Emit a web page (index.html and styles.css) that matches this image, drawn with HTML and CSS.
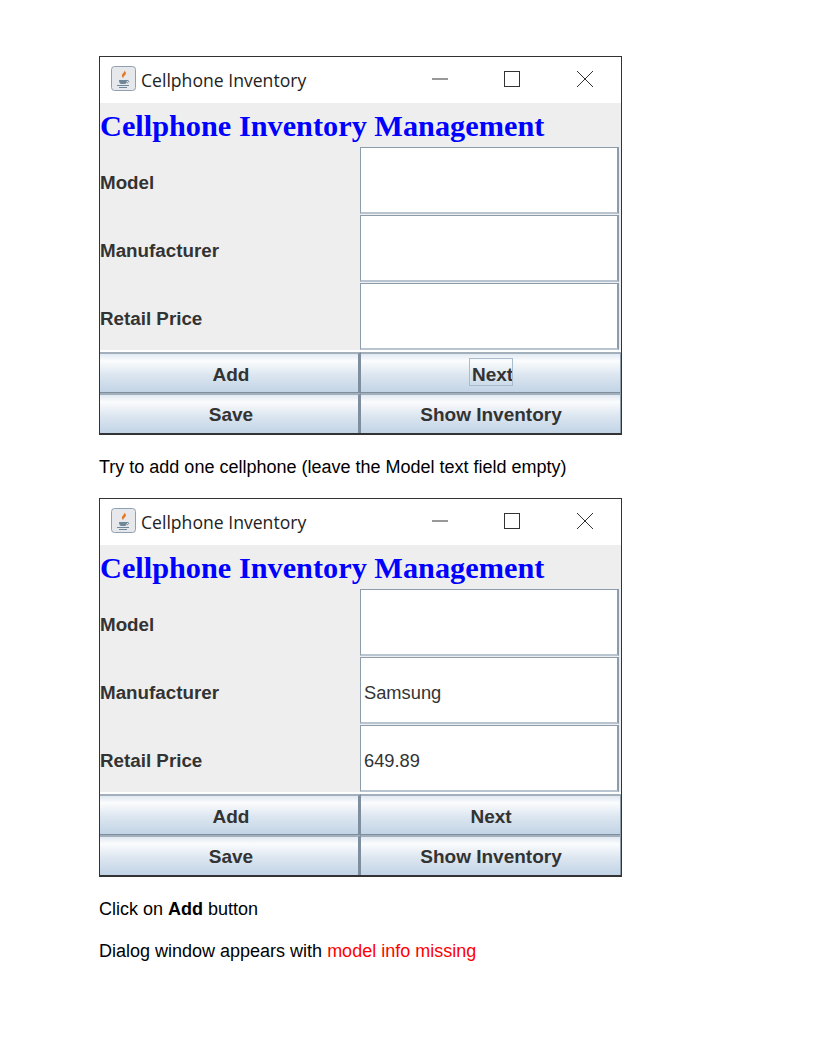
FILE: index.html
```html
<!DOCTYPE html>
<html lang="en">
<head>
  <meta charset="UTF-8">
  <title>Cellphone Inventory</title>
  <link rel="stylesheet" href="styles.css">
</head>
<body>
  <div class="page">
    <!-- first window, all fields empty -->
    <div class="window">
      <div class="titlebar">
        <svg class="java-icon" width="25" height="25" viewBox="0 0 25 25">
          <rect x="0.5" y="0.5" width="24" height="24" rx="3" fill="#e6e8eb" stroke="#8fa0b2"/>
          <path d="M13 4c2 2-3 4-2 6.500 .5 1 1.500 1.500 1.500 1.500-1-2 4-3.500 2-6-.5-.7-1-1.300-1.500-2z" fill="#e8761c"/>
          <path d="M8 14h8c0 2-.5 3.500-2 4h-4c-1.500-.5-2-2-2-4z" fill="#6f8798"/>
          <path d="M16 14.500c2-.5 2.500 1.500 0 2.500M6 19.500h12M8 21.500h8" fill="none" stroke="#6f8798"/>
        </svg>
        <span class="title-text">Cellphone Inventory</span>
        <div class="win-controls">
          <svg width="18" height="18" viewBox="0 0 18 18"><path d="M1 9h16" stroke="#333" fill="none"/></svg>
          <svg width="18" height="18" viewBox="0 0 18 18"><rect x="1.500" y="1.500" width="15" height="15" stroke="#333" fill="none"/></svg>
          <svg width="18" height="18" viewBox="0 0 18 18"><path d="M1 1l16 16M17 1L1 17" stroke="#333" fill="none"/></svg>
        </div>
      </div>
      <div class="content">
        <h1 class="heading">Cellphone Inventory Management</h1>
        <div class="form-row">
          <label>Model</label>
          <div class="field"></div>
        </div>
        <div class="form-row">
          <label>Manufacturer</label>
          <div class="field"></div>
        </div>
        <div class="form-row">
          <label>Retail Price</label>
          <div class="field"></div>
        </div>
      </div>
      <div class="buttons">
        <button class="btn">Add</button>
        <button class="btn"><span class="focused">Next</span></button>
        <button class="btn">Save</button>
        <button class="btn">Show Inventory</button>
      </div>
    </div>

    <p class="note first-note">Try to add one cellphone (leave the Model text field empty)</p>

    <!-- second window, model left empty -->
    <div class="window">
      <div class="titlebar">
        <svg class="java-icon" width="25" height="25" viewBox="0 0 25 25">
          <rect x="0.5" y="0.5" width="24" height="24" rx="3" fill="#e6e8eb" stroke="#8fa0b2"/>
          <path d="M13 4c2 2-3 4-2 6.500 .5 1 1.500 1.500 1.500 1.500-1-2 4-3.500 2-6-.5-.7-1-1.300-1.500-2z" fill="#e8761c"/>
          <path d="M8 14h8c0 2-.5 3.500-2 4h-4c-1.500-.5-2-2-2-4z" fill="#6f8798"/>
          <path d="M16 14.500c2-.5 2.500 1.500 0 2.500M6 19.500h12M8 21.500h8" fill="none" stroke="#6f8798"/>
        </svg>
        <span class="title-text">Cellphone Inventory</span>
        <div class="win-controls">
          <svg width="18" height="18" viewBox="0 0 18 18"><path d="M1 9h16" stroke="#333" fill="none"/></svg>
          <svg width="18" height="18" viewBox="0 0 18 18"><rect x="1.500" y="1.500" width="15" height="15" stroke="#333" fill="none"/></svg>
          <svg width="18" height="18" viewBox="0 0 18 18"><path d="M1 1l16 16M17 1L1 17" stroke="#333" fill="none"/></svg>
        </div>
      </div>
      <div class="content">
        <h1 class="heading">Cellphone Inventory Management</h1>
        <div class="form-row">
          <label>Model</label>
          <div class="field"></div>
        </div>
        <div class="form-row">
          <label>Manufacturer</label>
          <div class="field">Samsung</div>
        </div>
        <div class="form-row">
          <label>Retail Price</label>
          <div class="field">649.89</div>
        </div>
      </div>
      <div class="buttons">
        <button class="btn">Add</button>
        <button class="btn">Next</button>
        <button class="btn">Save</button>
        <button class="btn">Show Inventory</button>
      </div>
    </div>

    <p class="note click-note">Click on <strong>Add</strong> button</p>
    <p class="note">Dialog window appears with <span class="missing">model info missing</span></p>
  </div>
</body>
</html>
```

FILE: styles.css
```css
body {
  margin: 0;
  background-color: #fff;
  color: #000;
  font-family: "Liberation Sans", Arial, sans-serif;
}
.page {
  padding: 56px 0 0 99px;
}
.window {
  width: 521px;
  border: 1px solid #333;
  border-bottom-width: 2px;
}
.titlebar {
  height: 46px;
  display: flex;
  align-items: center;
  background-color: #fff;
  padding-left: 11px;
}
.java-icon {
  flex-shrink: 0;
  margin-top: -3px;
}
.title-text {
  margin-left: 5px;
  font-family: "Open Sans", sans-serif;
  font-size: 17.6px;
  color: #222;
}
.win-controls {
  margin-left: auto;
  margin-top: -3px;
  padding-right: 27px;
  display: flex;
  gap: 54px;
}
.win-controls svg:nth-child(3) {
  margin-left: 1px;
}
.content {
  background-color: #eee;
}
.heading {
  margin: 0;
  height: 43px;
  line-height: 46px;
  font-family: "Liberation Serif", serif;
  font-size: 30.3px;
  font-weight: bold;
  color: #00f;
  white-space: nowrap;
}
.form-row {
  display: grid;
  grid-template-columns: 260px 259px;
  height: 68px;
}
.form-row label {
  align-self: center;
  font-size: 18.8px;
  font-weight: bold;
  color: #333;
  padding-top: 6px;
}
.field {
  box-sizing: border-box;
  height: 67px;
  margin-top: 1px;
  display: flex;
  align-items: center;
  padding-left: 3px;
  padding-top: 6px;
  background-color: #fff;
  border: 1px solid #8c9cab;
  border-right-width: 2px;
  border-bottom: 2px solid #b8c4cf;
  font-size: 18.3px;
  color: #333;
}
.buttons {
  display: grid;
  grid-template-columns: 261px 260px;
  margin-top: 2px;
}
.btn {
  box-sizing: border-box;
  height: 41px;
  padding: 3px 0 0 4px;
  border: none;
  border-top: 2px solid #a3afba;
  border-bottom: 1px solid #7e8e9e;
  border-right: 3px solid #7e8e9e;
  background: linear-gradient(#e0e9f2 0%, #fbfcfd 18%, #dce6f0 55%, #c2d4e6 100%);
  font-family: "Liberation Sans", Arial, sans-serif;
  font-size: 19px;
  font-weight: bold;
  color: #333;
}
.btn:nth-child(even) {
  padding-left: 1px;
  border-right: 1px solid #8c9cab;
}
.btn:nth-child(n+3) {
  height: 40px;
  padding-top: 2px;
  border-bottom: none;
}
.focused {
  display: inline-block;
  width: 44px;
  height: 28px;
  line-height: 32px;
  overflow: hidden;
  border: 1px solid #a9bccd;
  white-space: nowrap;
  text-align: left;
  padding-left: 2px;
  box-sizing: border-box;
}
.note {
  margin: 0;
  padding-top: 18px;
  height: 42px;
  box-sizing: border-box;
  font-size: 18px;
  line-height: 28px;
}
.first-note {
  height: 63px;
}
.missing {
  color: #f00;
}
```
